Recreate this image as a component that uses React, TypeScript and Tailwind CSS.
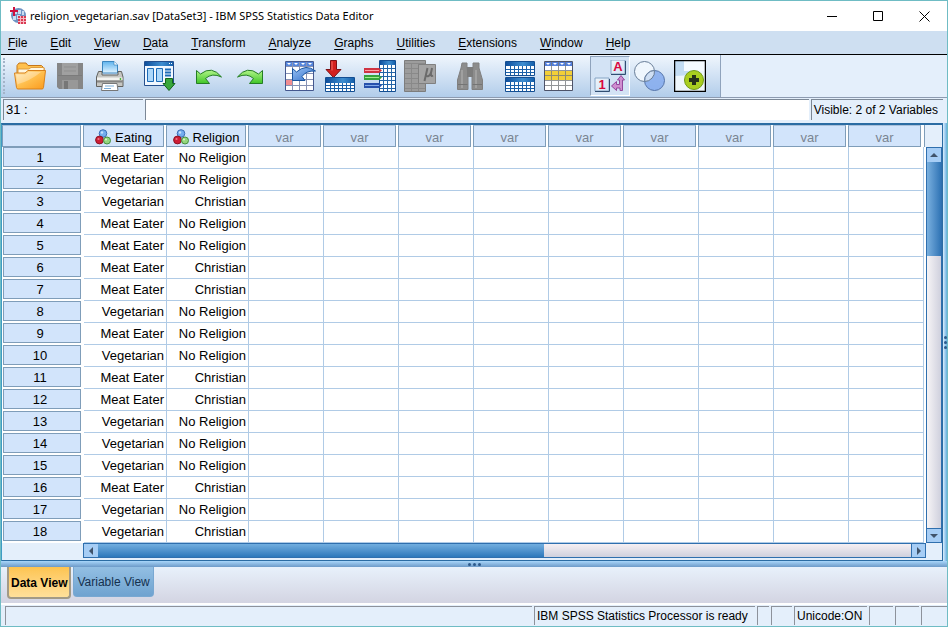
import React from "react";

const menus = ["File", "Edit", "View", "Data", "Transform", "Analyze", "Graphs", "Utilities", "Extensions", "Window", "Help"];

const M = "Meat Eater";
const V = "Vegetarian";
const N = "No Religion";
const C = "Christian";

const rows = [
  [M, N], [V, N], [V, C], [M, N], [M, N], [M, C],
  [M, C], [V, N], [M, N], [V, N], [M, C], [M, C],
  [V, N], [V, N], [V, N], [M, C], [V, N], [V, C],
];

const emptyCols = [1, 2, 3, 4, 5, 6, 7, 8, 9];

function Gradients() {
  return (
    <svg width="0" height="0" className="absolute" aria-hidden="true">
      <defs>
        <linearGradient id="folder" x1="0" y1="0" x2="1" y2="1">
          <stop offset="0" stopColor="#ffe9b8" />
          <stop offset="0.5" stopColor="#ffbf4e" />
          <stop offset="1" stopColor="#fb9a1c" />
        </linearGradient>
        <linearGradient id="blueBar" x1="0" y1="0" x2="1" y2="0">
          <stop offset="0" stopColor="#0f4f9c" />
          <stop offset="0.6" stopColor="#3f8ed0" />
          <stop offset="1" stopColor="#1560ab" />
        </linearGradient>
        <linearGradient id="paper" x1="0" y1="0" x2="0" y2="1">
          <stop offset="0" stopColor="#5fb4ee" />
          <stop offset="1" stopColor="#e3f4ff" />
        </linearGradient>
        <linearGradient id="green" x1="0" y1="0" x2="0" y2="1">
          <stop offset="0" stopColor="#b3f58a" />
          <stop offset="1" stopColor="#3fc526" />
        </linearGradient>
        <linearGradient id="blueArrow" x1="0" y1="0" x2="1" y2="1">
          <stop offset="0" stopColor="#9cc4f5" />
          <stop offset="1" stopColor="#2d6cc8" />
        </linearGradient>
        <linearGradient id="tile" x1="0" y1="0" x2="1" y2="1">
          <stop offset="0" stopColor="#ffffff" />
          <stop offset="1" stopColor="#c3d9f0" />
        </linearGradient>
      </defs>
    </svg>
  );
}

const OpenIcon = () => (
  <svg width="32" height="32" viewBox="0 0 32 32">
    <path d="M3 14V5.500L5 3H12L14 5.500H27.500L30 8V15Z" fill="#ffc04d" stroke="#c5761a" />
    <path d="M4 9H15L17 7.500H30V17H4Z" fill="#fff6e0" stroke="#dd9c40" />
    <path d="M0.500 13H11L14 10.500H31.500L29.500 27.500Q29.300 29 28 29H4Q2.800 29 2.500 27.500Z" fill="url(#folder)" stroke="#d9811a" />
    <path d="M4 24Q16 21 27 12H14.500L11.500 14.500H2.200L3.500 25Z" fill="#fff" opacity="0.300" />
  </svg>
);

const SaveIcon = () => (
  <svg width="32" height="32" viewBox="0 0 32 32">
    <path d="M3 3H29V29H5L3 27Z" fill="#868686" />
    <path d="M8 3H24V15H8Z" fill="#a0a0a0" />
    <path d="M10 7H22M10 11H22" stroke="#8f8f8f" />
    <path d="M8 20H24V29H8Z" fill="#989898" />
    <path d="M10 21H14V29H10Z" fill="#777" />
    <path d="M4 15.500H28" stroke="#7b7b7b" />
  </svg>
);

const PrintIcon = () => (
  <svg width="32" height="32" viewBox="0 0 32 32">
    <path d="M8.500 13V1.500H20L23.500 5V13Z" fill="url(#paper)" stroke="#3c86bf" />
    <path d="M20 1.500V5H23.500" fill="#fff" stroke="#3c86bf" strokeWidth="0.700" />
    <path d="M4.500 11.500H8V15H24V11.500H27.500L29 17V26.500H2.500V17Z" fill="#c6c6c2" stroke="#62625f" />
    <path d="M3 17.500H28.500V20H3Z" fill="#f3f3f0" />
    <path d="M3 21.500H28.500" stroke="#858583" strokeWidth="2" />
    <path d="M8.500 23.500H23L24 30.500H7.500Z" fill="#fff" stroke="#777" />
    <path d="M11 26H20M10 28.500H17" stroke="#78abd6" />
    <circle cx="26.500" cy="19" r="0.900" fill="#42ae32" />
  </svg>
);

const RecallIcon = () => (
  <svg width="32" height="32" viewBox="0 0 32 32">
    <path d="M0.500 1.500H29.500V25.500H0.500Z" fill="#f2f8ff" stroke="#244f8e" />
    <path d="M1 2H29V6H1Z" fill="url(#blueBar)" />
    <path d="M25 3.500H28" stroke="#fff" strokeDasharray="1 1" />
    <path d="M3.500 8.500H9.500V21.500H3.500ZM12.500 8.500H18.500V21.500H12.500Z" fill="#add8fb" stroke="#1d6bb7" />
    <path d="M21 9.500H27M21 12.500H27M21 15.500H27" stroke="#1d6bb7" strokeWidth="2" />
    <path d="M21.500 18.500H28.500V23.500H31L25 30.500L19 23.500H21.500Z" fill="#38a83b" stroke="#14641b" />
  </svg>
);

const UndoIcon = ({ flip = false }: { flip?: boolean }) => (
  <svg width="32" height="32" viewBox="0 0 32 32">
    <path
      transform={flip ? "matrix(-1 0 0 1 31 0)" : undefined}
      d="M2.500 10.500L6.500 14Q18 5 27.500 17Q18 12.500 11.500 18.500L15.500 23.500H2.500Z"
      fill="url(#green)"
      stroke="#257d24"
    />
  </svg>
);

const GotoCaseIcon = () => (
  <svg width="32" height="32" viewBox="0 0 32 32">
    <path d="M1.500 1.500H29.500V30.500H1.500Z" fill="#fff" stroke="#44588f" />
    <path d="M2 2H29V6H2Z" fill="#5586dc" />
    <path d="M3 3H7L5 5ZM10 3H14L12 5ZM17 3H21L19 5ZM24 3H28L26 5Z" fill="#fff" />
    <path d="M2 20H8V25H2Z" fill="#f18c91" />
    <path d="M8.500 2V30M15.500 2V30M22.500 2V30M2 6.500H29M2 13.500H29M2 19.500H29M2 25.500H29" stroke="#8792b4" />
    <path d="M8.500 8.500L12.500 12Q22 3.500 31.500 11Q22 10.500 18 16.500L21 20.500H8.500Z" fill="url(#blueArrow)" stroke="#19549f" />
  </svg>
);

const GotoVariableIcon = () => (
  <svg width="32" height="32" viewBox="0 0 32 32">
    <path d="M6.500 0.500H12.500V9.500H17L9.500 17.500L2 9.500H6.500Z" fill="#d4201f" stroke="#7c1115" />
    <path d="M8 1.500V10.500" stroke="#f36d65" />
    <path d="M1.500 17.500H30.500V31.500H1.500Z" fill="#fff" stroke="#134e92" />
    <path d="M2 18H30V23H2Z" fill="url(#blueBar)" />
    <path d="M6.500 23V31M10.500 23V31M14.500 23V31M18.500 23V31M22.500 23V31M26.500 23V31M2 25.500H30M2 28.500H30" stroke="#1c61a8" />
  </svg>
);

const VariablesIcon = () => (
  <svg width="32" height="32" viewBox="0 0 32 32">
    <path d="M15.500 0.500H31.500V31.500H15.500Z" fill="#fff" stroke="#134e92" />
    <path d="M16 1H31V5H16Z" fill="url(#blueBar)" />
    <path d="M19.500 5V31M23.500 5V31M27.500 5V31M16 8.500H31M16 12.500H31M16 16.500H31M16 20.500H31M16 24.500H31M16 28.500H31" stroke="#2465a7" />
    <path d="M0 8H15L18 10.500L15 13H0Z" fill="#cf3442" />
    <path d="M0 15H15L18 17.500L15 20H0Z" fill="#36a33b" />
    <path d="M0 23H15L18 25.500L15 28H0Z" fill="#2751ac" />
    <path d="M1 10.500H15" stroke="#ffa0a6" />
    <path d="M1 17.500H15" stroke="#a0ed8d" />
    <path d="M1 25.500H15" stroke="#83abe9" />
  </svg>
);

const DescriptivesIcon = () => (
  <svg width="32" height="32" viewBox="0 0 32 32">
    <path d="M0.500 0.500H21.500V31.500H0.500Z" fill="#9c9c9c" stroke="#7d7d7d" />
    <path d="M1 3.500H21M1 8.500H21M1 13.500H21M1 18.500H21M1 23.500H21M1 28.500H21M7.500 3V31M14.500 3V31" stroke="#898989" />
    <path d="M14.500 4.500H31.500V23.500H14.500Z" fill="#a4a4a4" stroke="#808080" />
    <path d="M20.500 21L23.500 8M22 14Q22 17 24.500 16Q27 15 28 8M27 13Q26.500 17 29 15.500" fill="none" stroke="#6b6b6b" strokeWidth="2" />
  </svg>
);

const FindIcon = () => (
  <svg width="32" height="32" viewBox="0 0 32 32">
    <path d="M8 3H13V8L14 14V29.500H3.500V20L7 8Z" fill="#8c8c8c" stroke="#808080" />
    <path d="M19 3H25V8L28.500 20V29.500H18V14L19 8Z" fill="#8c8c8c" stroke="#808080" />
    <path d="M13 7H19V17H13Z" fill="#7c7c7c" />
    <path d="M8 10V28M22 10V28" stroke="#a0a0a0" strokeWidth="2" />
    <path d="M4 24.500H13.500M18.500 24.500H28" stroke="#747474" />
  </svg>
);

const SplitFileIcon = () => (
  <svg width="32" height="32" viewBox="0 0 32 32">
    <path d="M1.500 1.500H30.500V15.500H1.500ZM1.500 17.500H30.500V31.500H1.500Z" fill="#fff" stroke="#134e92" />
    <path d="M2 2H30V6H2ZM2 18H30V22H2Z" fill="url(#blueBar)" />
    <path d="M6.500 6V15M10.500 6V15M14.500 6V15M18.500 6V15M22.500 6V15M26.500 6V15M2 9.500H30M2 12.500H30M6.500 22V31M10.500 22V31M14.500 22V31M18.500 22V31M22.500 22V31M26.500 22V31M2 25.500H30M2 28.500H30" stroke="#1c61a8" />
  </svg>
);

const SelectCasesIcon = () => (
  <svg width="32" height="32" viewBox="0 0 32 32">
    <path d="M0.500 1.500H28.500V30.500H0.500Z" fill="#fff" stroke="#4d5369" />
    <path d="M1 2H28V6H1Z" fill="#527fdb" />
    <path d="M2 3H6L4 5ZM9 3H13L11 5ZM16 3H20L18 5ZM23 3H27L25 5Z" fill="#fff" />
    <path d="M1 11H28V20H1Z" fill="#f3cf37" />
    <path d="M7.500 2V30M14.500 2V30M21.500 2V30M1 10.500H28M1 15.500H28M1 20.500H28M1 25.500H28" stroke="#777b7f" opacity="0.800" />
  </svg>
);

const ValueLabelsIcon = () => (
  <svg width="32" height="32" viewBox="0 0 32 32">
    <path d="M17 0H31V14H17ZM1 18H15V31H1Z" fill="url(#tile)" stroke="#86a5c5" />
    <path d="M31.500 1V14.500H17M15.500 19V31.500H1" fill="none" stroke="#314e72" />
    <text x="24" y="11" textAnchor="middle" fontFamily="Liberation Sans, sans-serif" fontWeight="bold" fontSize="13" fill="#d9083e">A</text>
    <text x="8" y="29" textAnchor="middle" fontFamily="Liberation Sans, sans-serif" fontWeight="bold" fontSize="13" fill="#d9083e">1</text>
    <path d="M23.500 20L27 15.500L30.500 20H28.500V30.500H26V28H22.500V30.500L17.500 26L22.500 21.500V24.500H25.500V20Z" fill="#cf8ed0" stroke="#93479c" />
  </svg>
);

const VennIcon = () => (
  <svg width="32" height="32" viewBox="0 0 32 32">
    <circle cx="10.500" cy="11.500" r="10" fill="#eff6fd" stroke="#687d97" />
    <circle cx="20.500" cy="20.500" r="10" fill="#7fa8ee" fillOpacity="0.800" stroke="#5574a9" />
    <path d="M10.700 21.500A10 10 0 0 0 20.500 10.500A10 10 0 0 0 10.700 21.500Z" fill="#cfdff4" stroke="#687d97" />
  </svg>
);

const UseSetsIcon = () => (
  <svg width="32" height="32" viewBox="0 0 32 32">
    <path d="M1 1H31V31H1Z" fill="#eef6fc" />
    <path d="M1 1H31V8Q20 16 1 16Z" fill="#c3dcf3" />
    <path d="M10 1H31V11H10Z" fill="#f5faff" />
    <path d="M0.500 0.500H31.500V31.500H0.500Z" fill="none" stroke="#000" strokeWidth="1.500" />
    <circle cx="20" cy="20" r="9.500" fill="#a9ce20" stroke="#719b19" />
    <path d="M18 15H22V18H25V22H22V25H18V22H15V18H18Z" fill="#26311a" />
  </svg>
);

const toolGroups = [
  [
    { label: "Open data document", icon: <OpenIcon /> },
    { label: "Save this document", icon: <SaveIcon /> },
    { label: "Print", icon: <PrintIcon /> },
  ],
  [{ label: "Recall recently used dialogs", icon: <RecallIcon /> }],
  [
    { label: "Undo", icon: <UndoIcon /> },
    { label: "Redo", icon: <UndoIcon flip /> },
  ],
  [
    { label: "Go to case", icon: <GotoCaseIcon /> },
    { label: "Go to variable", icon: <GotoVariableIcon /> },
    { label: "Variables", icon: <VariablesIcon /> },
    { label: "Run descriptive statistics", icon: <DescriptivesIcon /> },
  ],
  [{ label: "Find", icon: <FindIcon /> }],
  [
    { label: "Split file", icon: <SplitFileIcon /> },
    { label: "Select cases", icon: <SelectCasesIcon /> },
  ],
  [
    { label: "Value labels", icon: <ValueLabelsIcon />, pressed: true },
    { label: "Use variable sets", icon: <VennIcon /> },
    { label: "Show all variables", icon: <UseSetsIcon /> },
  ],
];

const AppIcon = () => (
  <svg width="18" height="18" viewBox="0 0 18 18">
    <circle cx="9.500" cy="8.500" r="7.500" fill="#6f93c4" />
    <path d="M5 4H8V7H5ZM9 3H12V7H9ZM13 4H15V8H13ZM4 9H7V13H4ZM8 8H11V12H8Z" fill="#c9dcf1" />
    <path d="M4 0H6V3H9V5H6V9H4V5H1V3H4Z" fill="#d0103f" />
    <path d="M9 9H17V17H9Z" fill="#d93a52" />
    <path d="M9 11.500H17M9 14.500H17M11.500 9V17M14.500 9V17" stroke="#f7b9c2" />
  </svg>
);

const NominalIcon = () => (
  <svg width="16" height="16" viewBox="0 0 16 16" className="shrink-0">
    <circle cx="8" cy="4.500" r="3.800" fill="#73acee" stroke="#3a6db5" />
    <circle cx="4.500" cy="11" r="3.900" fill="#ce1d35" stroke="#8c1425" />
    <circle cx="12" cy="11.500" r="3.500" fill="#94d67d" stroke="#468f3e" />
    <circle cx="7" cy="3.500" r="1.200" fill="#c7e0fc" />
    <circle cx="3.500" cy="10" r="1.100" fill="#ed7484" />
    <circle cx="11" cy="10.500" r="1.100" fill="#d3f4c6" />
  </svg>
);

const Arrow = ({ d }: { d: string }) => (
  <svg width="8" height="8" viewBox="0 0 8 8">
    <path d={d} fill="#3f536b" />
  </svg>
);

const HeaderBox = ({ children }: { children?: React.ReactNode }) => (
  <div className="mr-[3px] -ml-px flex h-[22px] items-center justify-center gap-1 border border-[#7f9db9] border-t-[#a9c0da] bg-[#d2e4fb] pt-[2px]">
    {children}
  </div>
);

export default function App() {
  return (
    <div className="flex min-h-screen flex-col overflow-hidden border border-[#6fbcc4] bg-[#e4effb] font-['Liberation_Sans',Arial,sans-serif] text-[12px] leading-[14px] text-black">
      <Gradients />

      {/* Title bar */}
      <header className="flex h-[30px] items-center bg-white pl-2">
        <AppIcon />
        <h1 className="ml-[3px] min-w-0 flex-1 font-['Noto_Sans',sans-serif] text-[11px] leading-[16px] whitespace-nowrap">
          religion_vegetarian.sav [DataSet3] - IBM SPSS Statistics Data Editor
        </h1>
        <button aria-label="Minimize" className="flex h-full w-[46px] items-center justify-center">
          <svg width="11" height="11" viewBox="0 0 11 11"><path d="M0 5.500H10" stroke="#000" /></svg>
        </button>
        <button aria-label="Maximize" className="flex h-full w-[46px] items-center justify-center">
          <svg width="11" height="11" viewBox="0 0 11 11"><path d="M0.500 0.500H9.500V9.500H0.500Z" fill="none" stroke="#000" /></svg>
        </button>
        <button aria-label="Close" className="flex h-full w-[46px] items-center justify-center">
          <svg width="11" height="11" viewBox="0 0 11 11"><path d="M0.500 0.500L10.500 10.500M10.500 0.500L0.500 10.500" stroke="#000" /></svg>
        </button>
      </header>

      <nav className="flex h-6 items-center gap-[23px] border-b border-black bg-[#cedff1] pl-[7px]">
        {menus.map((name) => (
          <button key={name}>
            <span className="underline underline-offset-2">{name[0]}</span>
            {name.slice(1)}
          </button>
        ))}
      </nav>

      {/* Toolbar */}
      <div className="flex h-[43px] border-b border-[#8d9bb0]">
        <div role="toolbar" className="flex items-center gap-[10px] border-r border-[#8fa3bc] bg-linear-to-b from-[#f0f6fd] to-[#b2cdea] pr-[10px]">
          <div className="-mr-[9px] ml-[2px] h-9 border-l-2 border-dotted border-[#a3b4c9] pl-[4px]" />
          {toolGroups.map((group, i) => (
            <div key={i} className="flex">
              {group.map((tool) => (
                <button
                  key={tool.label}
                  aria-label={tool.label}
                  className={
                    "pressed" in tool
                      ? "flex h-10 w-10 items-center justify-center border border-t-[#8fa3bc] border-r-white border-b-white border-l-[#8fa3bc] bg-[#d3e3f5]"
                      : "flex h-10 w-10 items-center justify-center"
                  }
                >
                  {tool.icon}
                </button>
              ))}
            </div>
          ))}
        </div>
      </div>

      {/* Cell editor row */}
      <div className="flex h-[25px] gap-[2px] pt-[1px] pr-1 pb-[3px] pl-[2px]">
        <div className="flex w-[140px] shrink-0 items-center border-t border-l border-[#7c8896] pl-[2px] text-[13px]">31 :</div>
        <input aria-label="Cell value" className="min-w-0 flex-1 border-t border-l border-[#7c8896] bg-white px-1 outline-none" />
        <div className="flex shrink-0 items-center border-t border-l border-[#7c8896] pr-[5px] pl-[2px]">Visible: 2 of 2 Variables</div>
      </div>

      {/* Data grid */}
      <div className="flex flex-1">
        <div className="flex min-w-0 flex-1 flex-col border border-t-2 border-[#2b6ca3] border-l-[#3e9cc4] bg-[#e4effb]">
          <div className="flex flex-1">
            <div className="min-w-0 flex-1 overflow-hidden bg-white">
              <table className="w-full table-fixed border-separate border-spacing-0 text-[13px] leading-[15px]">
                <colgroup>
                  <col className="w-[82px]" />
                  <col className="w-[83px]" />
                  <col className="w-[82px]" />
                  {emptyCols.map((c) => (
                    <col key={c} className="w-[75px]" />
                  ))}
                  <col />
                </colgroup>
                <thead>
                  <tr>
                    <th className="p-0 pl-[1px]"><HeaderBox /></th>
                    <th className="p-0 font-normal"><HeaderBox><NominalIcon />Eating</HeaderBox></th>
                    <th className="p-0 font-normal"><HeaderBox><NominalIcon />Religion</HeaderBox></th>
                    {emptyCols.map((c) => (
                      <th key={c} className="p-0 font-normal text-[#7b8492]"><HeaderBox>var</HeaderBox></th>
                    ))}
                    <th className="border-l border-[#7f9db9] bg-[#e4effb] p-0" />
                  </tr>
                </thead>
                <tbody>
                  {rows.map(([eating, religion], i) => (
                    <tr key={i}>
                      <th className="h-[22px] p-0 align-top font-normal">
                        <div className="mr-[3px] ml-[1px] h-5 border border-[#7f9db9] bg-[#d2e4fb] pt-[2px] pr-1">{i + 1}</div>
                      </th>
                      <td className="border-r border-b border-[#b0cbe6] p-0 pr-[2px] text-right">{eating}</td>
                      <td className="border-r border-b border-[#b0cbe6] p-0 pr-[2px] text-right">{religion}</td>
                      {emptyCols.map((c) => (
                        <td key={c} className="border-r border-b border-[#b0cbe6] p-0" />
                      ))}
                      <td className="p-0" />
                    </tr>
                  ))}
                </tbody>
              </table>
            </div>
            <div className="flex w-4 flex-col pt-[22px]">
              <div className="flex flex-1 flex-col border border-[#2f6fae] bg-linear-to-r from-[#f6f4f6] to-[#cfd0dd]">
                <button aria-label="Scroll up" className="flex h-[14px] items-center justify-center bg-[#a6cdf5]">
                  <Arrow d="M0 6L4 2L8 6Z" />
                </button>
                <div className="h-[94px] bg-linear-to-r from-[#79b0df] to-[#2f74b5]" />
                <button aria-label="Scroll down" className="mt-auto flex h-[14px] items-center justify-center border-t border-[#2f6fae] bg-[#a6cdf5]">
                  <Arrow d="M0 2L4 6L8 2Z" />
                </button>
              </div>
            </div>
          </div>
          <div className="mb-[2px] flex h-[15px] pr-4 pl-[81px]">
            <div className="flex flex-1 border border-[#2f6fae] bg-linear-to-b from-[#f6f0f3] to-[#cfd0dd]">
              <button aria-label="Scroll left" className="flex w-[14px] items-center justify-center bg-[#a6cdf5]">
                <Arrow d="M6 0L2 4L6 8Z" />
              </button>
              <div className="w-[53%] bg-linear-to-b from-[#72aedf] to-[#2c78bb]" />
              <button aria-label="Scroll right" className="ml-auto flex w-[14px] items-center justify-center border-l border-[#2f6fae] bg-[#a6cdf5]">
                <Arrow d="M2 0L6 4L2 8Z" />
              </button>
            </div>
          </div>
        </div>
        <div className="flex w-[4px] flex-col items-center justify-center gap-[2px] bg-linear-to-r from-[#dceefe] to-[#62aede]">
          <i className="h-[3px] w-[3px] rounded-full bg-[#2c5a8c]" />
          <i className="h-[3px] w-[3px] rounded-full bg-[#2c5a8c]" />
          <i className="h-[3px] w-[3px] rounded-full bg-[#2c5a8c]" />
        </div>
      </div>
      <div className="flex h-[6px] items-center justify-center gap-[2px] bg-linear-to-b from-[#a8d6fa] to-[#6d9ac8]">
        <i className="h-[3px] w-[3px] rounded-full bg-[#2c5a8c]" />
        <i className="h-[3px] w-[3px] rounded-full bg-[#2c5a8c]" />
        <i className="h-[3px] w-[3px] rounded-full bg-[#2c5a8c]" />
      </div>

      {/* View tabs */}
      <div role="tablist" className="flex h-9 items-start gap-[2px] bg-linear-to-b from-[#e8f1fb] to-[#d3d4e2] pl-[6px]">
        <button role="tab" aria-selected="true" className="h-8 rounded-b-[4px] border-2 border-t-0 border-[#a29a86] bg-linear-to-b from-[#fdc450] to-[#ffe09a] px-[2px] pt-[2px] font-bold">
          Data View
        </button>
        <button role="tab" aria-selected="false" className="h-[30px] rounded-b-[4px] border border-t-0 border-[#78a8d2] bg-linear-to-b from-[#93bfe3] to-[#6fa3d0] px-[3px] text-[#14304e]">
          Variable View
        </button>
      </div>

      {/* Status bar */}
      <footer className="flex h-[23px] gap-[2px] border-t-2 border-white pt-[1px] pb-[1px] pl-1">
        <div className="flex-1 border-t border-l border-[#8d929b]" />
        <div className="flex w-[221px] items-center border-t border-l border-[#8d929b] pl-[2px]">IBM SPSS Statistics Processor is ready</div>
        <div className="w-3 border-t border-l border-[#8d929b]" />
        <div className="w-[21px] border-t border-l border-[#8d929b]" />
        <div className="flex w-[73px] items-center border-t border-l border-[#8d929b] pl-[2px]">Unicode:ON</div>
        <div className="w-6 border-t border-l border-[#8d929b]" />
        <div className="w-6 border-t border-l border-[#8d929b]" />
        <div className="w-[26px] border-t border-l border-[#8d929b]" />
      </footer>
    </div>
  );
}
